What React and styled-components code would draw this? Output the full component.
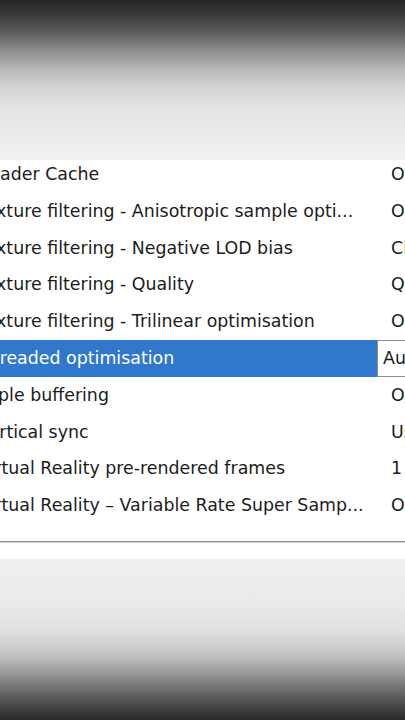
import React from 'react'
import styled, { createGlobalStyle } from 'styled-components'

const GlobalStyle = createGlobalStyle`
  html, body {
    margin: 0;
    padding: 0;
    background: #ffffff;
  }
  body {
    font-family: "DejaVu Sans", "Liberation Sans", sans-serif;
  }
`

// settings list (3D settings panel, cropped at the left)
const settings = [
  { name: 'Shader Cache', value: 'On' },
  { name: 'Texture filtering - Anisotropic sample opti...', value: 'Off' },
  { name: 'Texture filtering - Negative LOD bias', value: 'Clamp' },
  { name: 'Texture filtering - Quality', value: 'Quality' },
  { name: 'Texture filtering - Trilinear optimisation', value: 'On' },
  { name: 'Threaded optimisation', value: 'Auto', selected: true },
  { name: 'Triple buffering', value: 'Off' },
  { name: 'Vertical sync', value: 'Use the 3D application setting' },
  { name: 'Virtual Reality pre-rendered frames', value: '1' },
  { name: 'Virtual Reality – Variable Rate Super Samp...', value: 'Off' },
]

export default function App() {
  return (
    <Page>
      <GlobalStyle />
      <TopFade />
      <Panel>
        <List>
          {settings.map((item) => (
            <Row key={item.name} $selected={item.selected}>
              <Label $selected={item.selected}>{item.name}</Label>
              {item.selected ? (
                <Dropdown>{item.value}</Dropdown>
              ) : (
                <Value>{item.value}</Value>
              )}
            </Row>
          ))}
        </List>
        <Divider />
      </Panel>
      <BottomFade />
    </Page>
  )
}

const Page = styled.div`
  width: 405px;
  height: 720px;
  display: flex;
  flex-direction: column;
  overflow: hidden;
  background: #ffffff;
`

const TopFade = styled.div`
  height: 156px;
  flex: none;
  background: linear-gradient(
    to bottom,
    #262626 0px,
    #383838 14px,
    #585858 30px,
    #8c8c8c 50px,
    #bababa 70px,
    #d6d6d6 90px,
    #e5e5e5 110px,
    #ececec 135px,
    #f0f0f0 156px
  );
`

const Panel = styled.div`
  flex: none;
  background: linear-gradient(to bottom, #f1f1f1 0 4px, #ffffff 4px);
  padding-bottom: 16px;
`

const List = styled.div`
  display: flex;
  flex-direction: column;
  margin-left: -22px;
  width: calc(100% + 22px);
  padding-bottom: 17px;
`

const Row = styled.div`
  height: 36.8px;
  display: grid;
  grid-template-columns: ${(p) => (p.$selected ? '399px 1fr' : '413px 1fr')};
  align-items: stretch;
  font-size: 17.4px;
  line-height: 37.6px;
  white-space: nowrap;
`

const Label = styled.div`
  overflow: hidden;
  color: ${(p) => (p.$selected ? '#ffffff' : '#1c1c1c')};
  background: ${(p) => (p.$selected ? '#2f78cb' : 'transparent')};
  line-height: ${(p) => (p.$selected ? '36.8px' : 'inherit')};
`

const Value = styled.div`
  overflow: hidden;
  color: #1c1c1c;
`

const Dropdown = styled.div`
  overflow: hidden;
  color: #1c1c1c;
  background: #ffffff;
  border: 1px solid #8a8f96;
  border-right: none;
  padding-left: 5px;
  line-height: 34.8px;
`

const Divider = styled.div`
  height: 1px;
  background: #8c8c8c;
  border-bottom: 1px solid #d4d4d4;
`

const BottomFade = styled.div`
  flex: 1;
  background: linear-gradient(
    to bottom,
    #efefef 0px,
    #ebebeb 40px,
    #e0e0e0 72px,
    #c6c6c6 94px,
    #9a9a9a 114px,
    #6a6a6a 132px,
    #444444 148px,
    #262626 162px
  );
`
